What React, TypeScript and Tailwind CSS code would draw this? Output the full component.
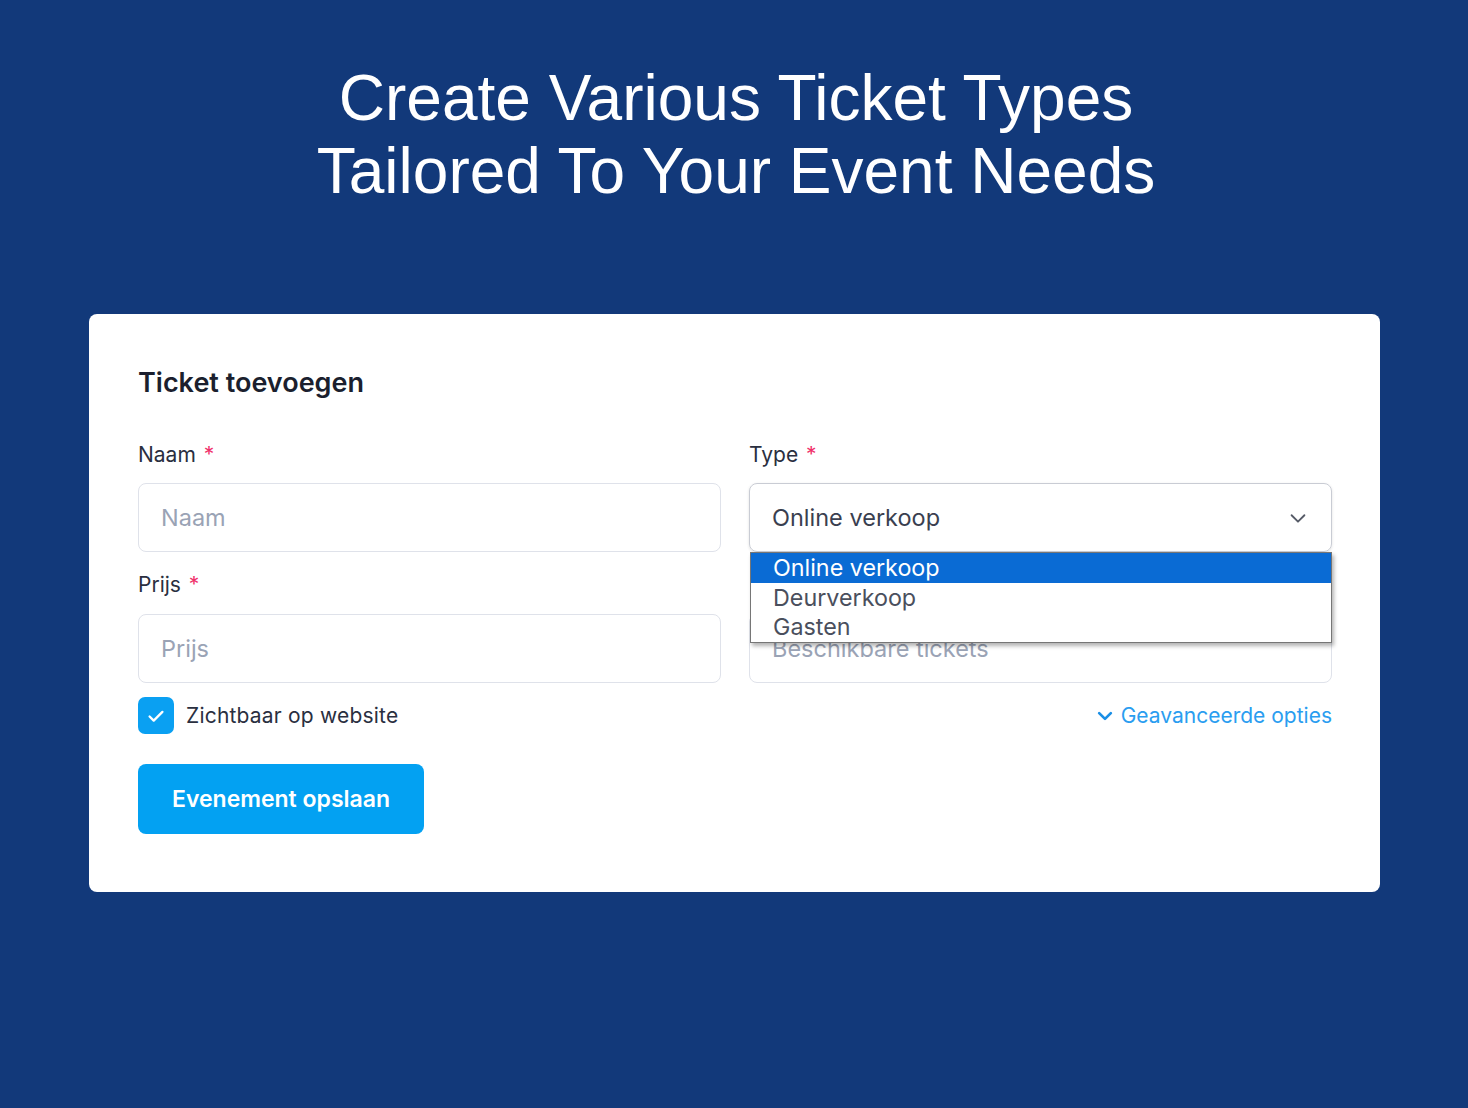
import React from "react";

export default function App() {
  return (
    <div className="w-[1468px] h-[1108px] bg-[#12397a] flex flex-col items-center" style={{ fontFamily: "Inter, 'Noto Sans', sans-serif" }}>
      <h1 className="mt-[62px] pl-[4px] text-center text-white text-[64px] leading-[73px] font-normal" style={{ fontFamily: "'Liberation Sans', Arial, sans-serif" }}>
        Create Various Ticket Types
        <br />
        Tailored To Your Event Needs
      </h1>
      <div className="mt-[106px] w-[1291px] h-[578px] bg-white rounded-[8px] pl-[49px] pr-[48px] pt-[52px] self-start ml-[89px]">
        <h2 className="text-[27px] leading-[34px] font-semibold text-[#1b1f2e]">Ticket toevoegen</h2>
        <div className="mt-[41px] grid grid-cols-2 gap-x-[28px]">
          <div>
            <label className="block text-[21px] leading-[28px] text-[#2a2f3f]">
              Naam <span className="ml-[2px] text-[#f0306a]">*</span>
            </label>
            <div className="mt-[14px] h-[69px] border border-[#dfe2ea] rounded-[8px] flex items-center px-[22px] text-[23.5px] text-[#9aa3b5]">
              Naam
            </div>
          </div>
          <div className="relative">
            <label className="block text-[21px] leading-[28px] text-[#2a2f3f]">
              Type <span className="ml-[2px] text-[#f0306a]">*</span>
            </label>
            <div className="mt-[14px] h-[69px] border border-[#c9ccd4] rounded-[8px] flex items-center justify-between px-[22px] text-[23.5px] text-[#3a3f50] shadow-[0_1px_3px_rgba(0,0,0,0.12)]">
              <span>Online verkoop</span>
              <svg width="22" height="22" viewBox="0 0 24 24" fill="none" stroke="#555a66" strokeWidth="2" strokeLinecap="round" strokeLinejoin="round">
                <path d="M5 9l7 7 7-7" />
              </svg>
            </div>
            <div className="absolute left-[1px] right-0 top-[111px] z-10 bg-white border border-[#767676] shadow-[2px_3px_4px_rgba(0,0,0,0.3)] text-[23.3px]">
              <div className="bg-[#0a6bd4] text-white px-[22px] h-[30px] leading-[30px]">Online verkoop</div>
              <div className="px-[22px] text-[#4a4f5d] h-[29px] leading-[29px]">Deurverkoop</div>
              <div className="px-[22px] text-[#4a4f5d] h-[30px] leading-[29px]">Gasten</div>
            </div>
          </div>
          <div className="mt-[19px]">
            <label className="block text-[21px] leading-[28px] text-[#2a2f3f]">
              Prijs <span className="ml-[2px] text-[#f0306a]">*</span>
            </label>
            <div className="mt-[15px] h-[69px] border border-[#dfe2ea] rounded-[8px] flex items-center px-[22px] text-[23.5px] text-[#9aa3b5]">
              Prijs
            </div>
          </div>
          <div className="mt-[19px]">
            <label className="block text-[21px] leading-[28px] text-[#2a2f3f]">
              Beschikbare tickets
            </label>
            <div className="mt-[15px] h-[69px] border border-[#dfe2ea] rounded-[8px] flex items-center px-[22px] text-[23.5px] text-[#9aa3b5]">
              Beschikbare tickets
            </div>
          </div>
        </div>
        <div className="mt-[14px] flex items-center justify-between">
          <div className="flex items-center gap-[12px]">
            <div className="w-[36px] h-[37px] rounded-[7px] bg-[#0aa0f2] flex items-center justify-center">
              <svg width="22" height="22" viewBox="0 0 24 24" fill="none" stroke="white" strokeWidth="2.5" strokeLinecap="round" strokeLinejoin="round">
                <path d="M5 12.5l4.5 4.5L19 7.5" />
              </svg>
            </div>
            <span className="text-[21px] text-[#2a2f3f] tracking-[0.2px]">Zichtbaar op website</span>
          </div>
          <div className="flex items-center gap-[6px] text-[21px] text-[#2a9df0]">
            <svg width="20" height="20" viewBox="0 0 24 24" fill="none" stroke="#1a8fe6" strokeWidth="3.2" strokeLinecap="round" strokeLinejoin="round">
              <path d="M5 8.5l7 7 7-7" />
            </svg>
            <span>Geavanceerde opties</span>
          </div>
        </div>
        <button className="mt-[30px] w-[286px] h-[70px] rounded-[8px] bg-[#03a1f2] text-white text-[23px] font-semibold">
          Evenement opslaan
        </button>
      </div>
    </div>
  );
}
